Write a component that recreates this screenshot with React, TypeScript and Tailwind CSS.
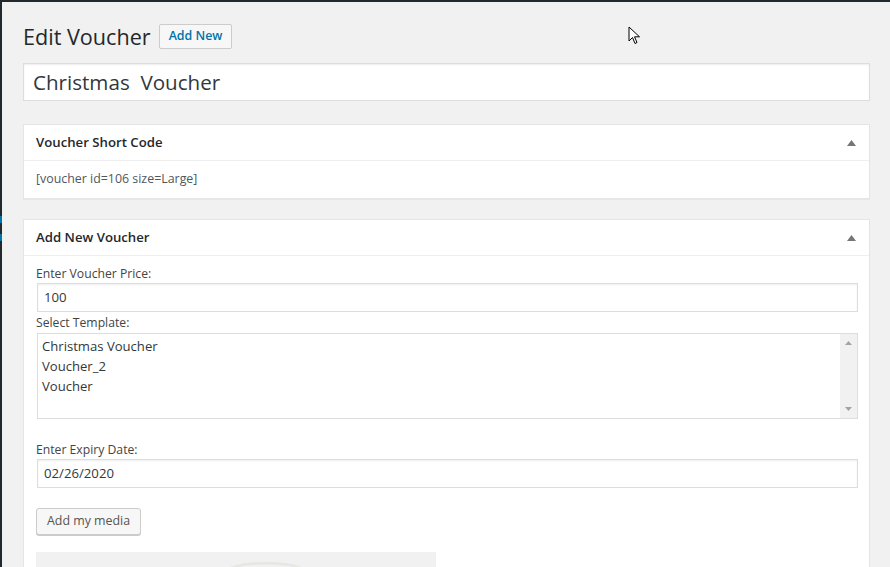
// Edit Voucher 页面 — WP 后台编辑界面还原

const font = { fontFamily: '"Segoe UI", "Open Sans", "Noto Sans", sans-serif' };

function Toggle() {
  // postbox 折叠箭头
  return (
    <svg width="9" height="6" viewBox="0 0 9 6" className="block">
      <path d="M0 6 L4.5 0 L9 6 Z" fill="#72777c" />
    </svg>
  );
}

function Postbox({ title, children }: { title: string; children: React.ReactNode }) {
  return (
    <div className="bg-white border border-[#e5e5e5] shadow-[0_1px_1px_rgba(0,0,0,0.04)]">
      <div className="h-[36px] flex items-center justify-between pl-[12px] pr-[13px] border-b border-[#eee]">
        <h2 className="text-[13.2px] font-semibold text-[#23282d] leading-none">{title}</h2>
        <Toggle />
      </div>
      {children}
    </div>
  );
}

function Field({ value }: { value: string }) {
  return (
    <div className="ml-px h-[29px] border border-[#ddd] shadow-[inset_0_1px_2px_rgba(0,0,0,0.07)] flex items-center px-[6px] text-[13.2px] text-[#32373c]">
      {value}
    </div>
  );
}

export default function App() {
  return (
    <div className="relative w-[890px] h-[567px] overflow-hidden bg-[#f1f1f1] border-t-2 border-[#23282d] flex" style={font}>
      {/* 左侧菜单边缘 */}
      <div className="w-[2px] bg-[#23282d] flex flex-col shrink-0">
        <div className="h-[214px]" />
        <div className="h-[7px] bg-[#0073aa]" />
        <div className="h-[11px]" />
        <div className="h-[7px] bg-[#0073aa]" />
      </div>

      <div className="flex-1 pl-[21px] pr-[20px] pt-[22px]">
        {/* 标题行 */}
        <div className="flex items-center gap-[8px] h-[25px]">
          <h1 className="text-[21.6px] leading-[29px] text-[#23282d] font-normal">Edit Voucher</h1>
          <button className="h-[25px] px-[9px] border border-[#ccc] bg-[#f7f7f7] rounded-[2px] text-[12.4px] font-semibold text-[#0073aa] leading-none">
            Add New
          </button>
        </div>

        <div className="mt-[14px] h-[38px] bg-white border border-[#ddd] shadow-[inset_0_1px_2px_rgba(0,0,0,0.07)] flex items-center px-[9px] text-[20.6px] text-[#32373c] whitespace-pre">
          Christmas  Voucher
        </div>

        <div className="mt-[23px]">
          <Postbox title="Voucher Short Code">
            <div className="h-[37px] flex items-center px-[12px] text-[12.4px] text-[#50575e]">
              [voucher id=106 size=Large]
            </div>
          </Postbox>
        </div>

        <div className="mt-[20px]">
          <Postbox title="Add New Voucher">
            <div className="pl-[12px] pr-[11px] pt-[9px] pb-[16px] text-[12.2px] text-[#444]">
              <div className="h-[18px] leading-[18px]">Enter Voucher Price:</div>
              <div>
                <Field value="100" />
              </div>
              <div className="mt-[2px] h-[18px] leading-[18px]">Select Template:</div>
              <div className="mt-px ml-px h-[86px] border border-[#ddd] flex text-[13.1px] text-[#32373c]">
                <div className="flex-1 pl-[4px] pt-[2px] leading-[20px]">
                  <div>Christmas Voucher</div>
                  <div>Voucher_2</div>
                  <div>Voucher</div>
                </div>
                <div className="w-[17px] bg-[#f1f1f1] flex flex-col items-center justify-between py-[7px]">
                  <svg width="7" height="4" viewBox="0 0 7 4"><path d="M0 4 L3.5 0 L7 4 Z" fill="#a3a3a3" /></svg>
                  <svg width="7" height="4" viewBox="0 0 7 4"><path d="M0 0 L3.5 4 L7 0 Z" fill="#a3a3a3" /></svg>
                </div>
              </div>
              <div className="mt-[22px] h-[18px] leading-[18px]">Enter Expiry Date:</div>
              <div>
                <Field value="02/26/2020" />
              </div>
              <button className="mt-[20px] h-[27px] px-[10px] border border-[#ccc] bg-[#f7f7f7] rounded-[3px] shadow-[0_1px_0_#ccc] text-[12.4px] text-[#555] leading-none">
                Add my media
              </button>
              <div className="mt-[17px] w-[400px] h-[40px] bg-[#f1f1f1] flex">
                <svg width="84" height="20" viewBox="0 0 84 20" className="mt-[6px] ml-[188px]">
                  <path d="M3 12 C 18 3, 66 3, 81 12" stroke="#e6e6e2" strokeWidth="2.5" fill="none" />
                </svg>
              </div>
            </div>
          </Postbox>
        </div>
      </div>

      {/* 鼠标指针 */}
      <svg className="absolute left-[628px] top-[24px]" width="14" height="20" viewBox="0 0 14 20">
        <path d="M1 1 L1 15 L4.5 11.5 L7 17.5 L9 16.5 L6.5 10.8 L11.5 10.8 Z" fill="#fff" stroke="#000" strokeWidth="1" strokeLinejoin="round" />
      </svg>
    </div>
  );
}
